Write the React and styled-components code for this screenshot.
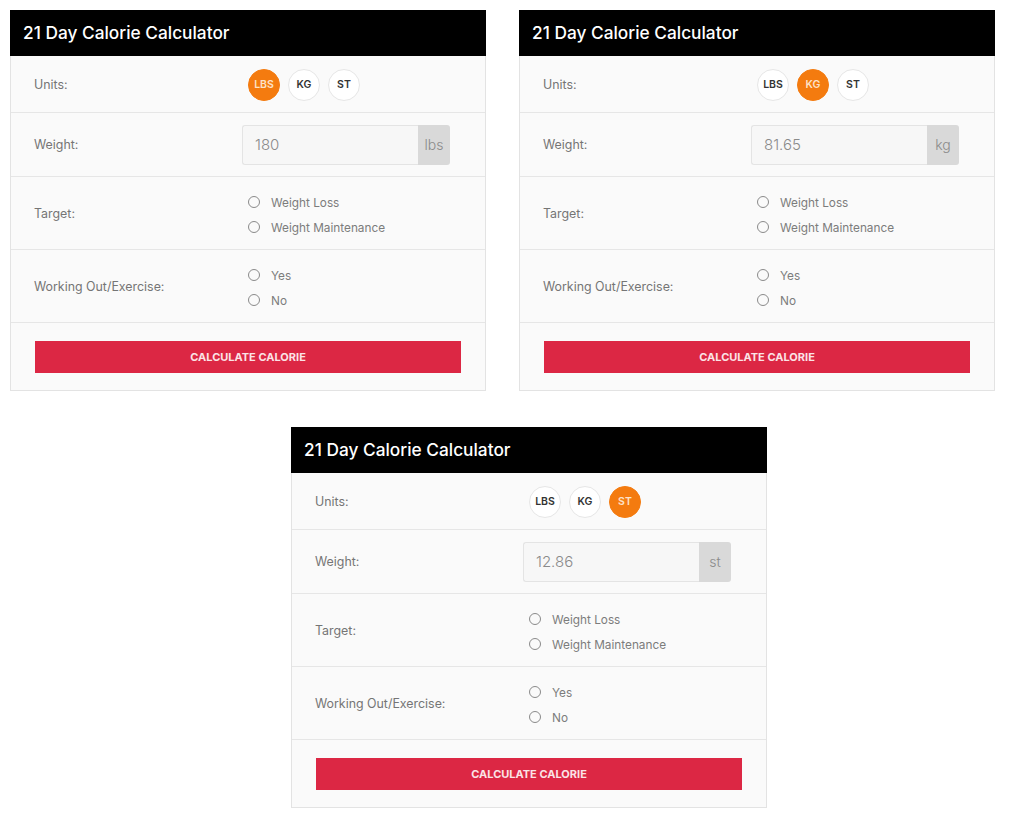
import React from 'react';
import styled, { createGlobalStyle } from 'styled-components';

const GlobalStyle = createGlobalStyle`
    body {
        margin: 0;
        background: #ffffff;
        font-family: Inter, "Noto Sans", Arial, sans-serif;
    }
`

const units = [
    { key: 'LBS', suffix: 'lbs', value: '180' },
    { key: 'KG', suffix: 'kg', value: '81.65' },
    { key: 'ST', suffix: 'st', value: '12.86' },
];

function Calculator({ unit }) {
    const current = units.find(u => u.key === unit);

    return (
        <Card>
            <Header>21 Day Calorie Calculator</Header>
            <Row height="57px">
                <Label>Units:</Label>
                <Value>
                    <Units>
                        {units.map(u => (
                            <UnitButton key={u.key} active={u.key === unit}>{u.key}</UnitButton>
                        ))}
                    </Units>
                </Value>
            </Row>
            <Row height="64px">
                <Label>Weight:</Label>
                <Value>
                    <InputGroup>
                        <Input>{current.value}</Input>
                        <Addon>{current.suffix}</Addon>
                    </InputGroup>
                </Value>
            </Row>
            <Row height="73px">
                <Label>Target:</Label>
                <Value shift="5px">
                    <Radio><Circle />Weight Loss</Radio>
                    <Radio><Circle />Weight Maintenance</Radio>
                </Value>
            </Row>
            <Row height="73px">
                <Label>Working Out/Exercise:</Label>
                <Value shift="5px">
                    <Radio><Circle />Yes</Radio>
                    <Radio><Circle />No</Radio>
                </Value>
            </Row>
            <Footer>
                <Button>CALCULATE CALORIE</Button>
            </Footer>
        </Card>
    );
}

export default function App() {
    return (
        <Page>
            <GlobalStyle />
            <TopRow>
                <Calculator unit="LBS" />
                <Calculator unit="KG" />
            </TopRow>
            <BottomRow>
                <Calculator unit="ST" />
            </BottomRow>
        </Page>
    );
}

const Page = styled.div`
    width: 1024px;
    padding-top: 10px;
`

const TopRow = styled.div`
    display: flex;
    gap: 33px;
    padding-left: 10px;
`

const BottomRow = styled.div`
    display: flex;
    padding-left: 291px;
    margin-top: 36px;
`

const Card = styled.div`
    width: 476px;
    background: #fafafa;
    border: 1px solid #e3e3e3;
    border-top: none;
    box-sizing: border-box;
`

const Header = styled.div`
    height: 46px;
    background: #000000;
    color: #ffffff;
    font-size: 17.3px;
    font-weight: 500;
    line-height: 46px;
    padding-left: 13px;
    margin: 0 -1px;
`

const Row = styled.div`
    display: flex;
    align-items: center;
    height: ${props => props.height};
    border-bottom: 1px solid #e6e6e6;
    box-sizing: border-box;
`

const Label = styled.div`
    width: 237px;
    padding-left: 23px;
    box-sizing: border-box;
    font-size: 12.4px;
    color: #757575;
`

const Value = styled.div`
    flex: 1;
    display: flex;
    flex-direction: column;
    padding-top: ${props => props.shift || '0'};
`

const Units = styled.div`
    display: flex;
    gap: 8px;
    margin-top: 1px;
`

const UnitButton = styled.div`
    width: 32px;
    height: 32px;
    border-radius: 50%;
    box-sizing: border-box;
    display: flex;
    align-items: center;
    justify-content: center;
    font-size: 10.5px;
    font-weight: 600;
    background: ${props => props.active ? '#f47b0f' : '#ffffff'};
    color: ${props => props.active ? '#fde2c8' : '#333333'};
    border: 1px solid ${props => props.active ? '#f47b0f' : '#e6e6e6'};
`

const InputGroup = styled.div`
    display: flex;
    width: 208px;
    height: 40px;
    margin-left: -6px;
`

const Input = styled.div`
    flex: 1;
    background: #f7f7f7;
    border: 1px solid #e4e4e4;
    border-right: none;
    border-radius: 3px 0 0 3px;
    display: flex;
    align-items: center;
    padding-left: 12px;
    font-size: 15px;
    font-weight: 300;
    color: #8a8a8a;
`

const Addon = styled.div`
    width: 32px;
    background: #d9d9d9;
    border-radius: 0 3px 3px 0;
    display: flex;
    align-items: center;
    justify-content: center;
    font-size: 14px;
    font-weight: 300;
    color: #8a8a8a;
`

const Radio = styled.div`
    display: flex;
    align-items: center;
    height: 25px;
    font-size: 11.8px;
    color: #7c7c7c;
`

const Circle = styled.span`
    width: 10px;
    height: 10px;
    border: 1px solid #8a8a8a;
    border-radius: 50%;
    margin-right: 11px;
    margin-top: -2px;
`

const Footer = styled.div`
    height: 67px;
    padding: 18px 24px 0 24px;
    box-sizing: border-box;
`

const Button = styled.div`
    height: 32px;
    background: #dc2744;
    color: #fbe3e6;
    font-size: 11px;
    font-weight: 700;
    display: flex;
    align-items: center;
    justify-content: center;
`
